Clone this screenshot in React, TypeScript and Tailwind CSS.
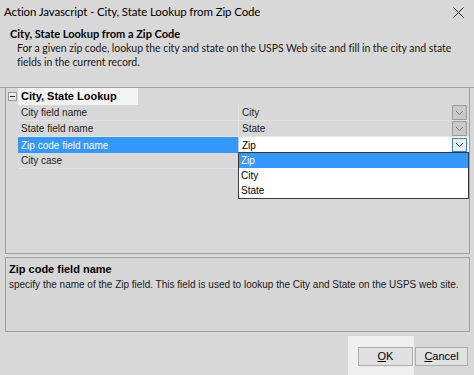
const rows = [
  { name: 'City field name', value: 'City' },
  { name: 'State field name', value: 'State' },
  { name: 'Zip code field name', value: 'Zip', selected: true },
  { name: 'City case', value: '' },
];

function Chevron({ color = '#7a7a7a' }: { color?: string }) {
  return (
    <svg width="9" height="6" viewBox="0 0 9 6" fill="none">
      <path d="M1 1l3.5 3.5L8 1" stroke={color} strokeWidth="1" />
    </svg>
  );
}

function DropButton({ active }: { active?: boolean }) {
  return (
    <div
      className={
        active
          ? 'w-[15px] h-[14px] flex items-center justify-center border border-[#3c7fb1] bg-[#e5f1fb]'
          : 'w-[15px] h-[15px] flex items-center justify-center border border-[#9c9c9c] bg-[#c9c9c9]'
      }
    >
      <Chevron color={active ? '#333333' : '#767676'} />
    </div>
  );
}

export default function App() {
  return (
    <div className="w-[474px] h-[375px] bg-[#d8d8d8] text-black flex flex-col overflow-hidden font-['Liberation_Sans',Arial,sans-serif]">
      {/* title bar */}
      <div className="h-[24px] flex items-center justify-between pl-[4px] pr-[10px] font-['Lato',sans-serif] text-[11.5px] tracking-[-0.12px]">
        <span>Action Javascript - City, State Lookup from Zip Code</span>
        <svg width="11" height="11" viewBox="0 0 11 11">
          <path d="M0.5 0.5l10 10M10.5 0.5l-10 10" stroke="#222" strokeWidth="1" />
        </svg>
      </div>

      {/* header */}
      <div className="h-[64px] border-b border-[#a0a0a0] font-['Lato',sans-serif]">
        <div className="mt-[3px] pl-[10px] text-[11px] font-bold leading-[14px]">City, State Lookup from a Zip Code</div>
        <div className="pl-[17px] pr-[20px] text-[10.5px] tracking-[-0.06px] leading-[14px] text-[#1a1a1a]">
          For a given zip code, lookup the city and state on the USPS Web site and fill in the city and state fields in the current record.
        </div>
      </div>

      {/* property grid */}
      <div className="relative ml-[5px] mr-[4px] h-[166px] border border-t-0 border-[#a0a0a0] bg-[#d8d8d8] text-[10px]">
        <div className="h-[17px] flex items-center">
          <div className="ml-[2px] w-[9px] h-[9px] border border-[#9a9a9a] bg-[#ececec] flex items-center justify-center">
            <div className="w-[5px] h-px bg-[#333]" />
          </div>
          <div className="ml-[1px] h-[17px] w-[120px] bg-[#f4f4f4] flex items-center pl-[3px] text-[11px] font-bold">
            City, State Lookup
          </div>
        </div>
        {rows.map((r) => (
          <div key={r.name} className="h-[16px] flex">
            <div className="w-[12px]" />
            <div
              className={
                r.selected
                  ? 'w-[220px] flex items-center pl-[3px] bg-[#3399ff] text-white'
                  : 'w-[220px] flex items-center pl-[3px] border-b border-[#e3e3e3] text-[#222]'
              }
            >
              {r.name}
            </div>
            <div
              className={
                r.selected
                  ? 'flex-1 flex items-center justify-between pl-[3px] pr-[2px] bg-white border-l border-[#c8c8c8]'
                  : 'flex-1 flex items-center justify-between pl-[3px] pr-[2px] border-b border-l border-[#e3e3e3] text-[#222]'
              }
            >
              <span>{r.value}</span>
              {r.value && <DropButton active={r.selected} />}
            </div>
          </div>
        ))}

        {/* open dropdown list */}
        <div className="absolute left-[232px] top-[64px] w-[231px] h-[47px] border border-[#3a3a3a] bg-white flex flex-col">
          <div className="h-[15px] flex items-center pl-[2px] bg-[#3399ff] text-white">Zip</div>
          <div className="h-[15px] flex items-center pl-[2px]">City</div>
          <div className="h-[15px] flex items-center pl-[2px]">State</div>
        </div>
      </div>

      {/* description */}
      <div className="mt-[3px] ml-[5px] mr-[4px] h-[75px] border border-[#a0a0a0] bg-[#d6d6d6] pl-[3px] pt-[4px] text-[10px]">
        <div className="font-bold text-[11px] leading-[14px]">Zip code field name</div>
        <div className="leading-[14px] mt-[2px] text-[#1a1a1a]">
          specify the name of the Zip field. This field is used to lookup the City and State on the USPS web site.
        </div>
      </div>

      {/* buttons */}
      <div className="flex justify-end items-end pr-[6px] mt-[4px] flex-1">
        <div className="bg-[#efefef] pl-[10px] pr-px pt-[11px] pb-[9px] h-[39px]">
          <button className="w-[55px] h-[19px] border border-[#adadad] bg-[#e1e1e1] text-[11px] flex items-center justify-center">
            <span className="underline">O</span>K
          </button>
        </div>
        <div className="pb-[9px] pl-px">
          <button className="w-[53px] h-[19px] border border-[#adadad] bg-[#e1e1e1] text-[11px] flex items-center justify-center">
            <span className="underline">C</span>ancel
          </button>
        </div>
      </div>
    </div>
  );
}
